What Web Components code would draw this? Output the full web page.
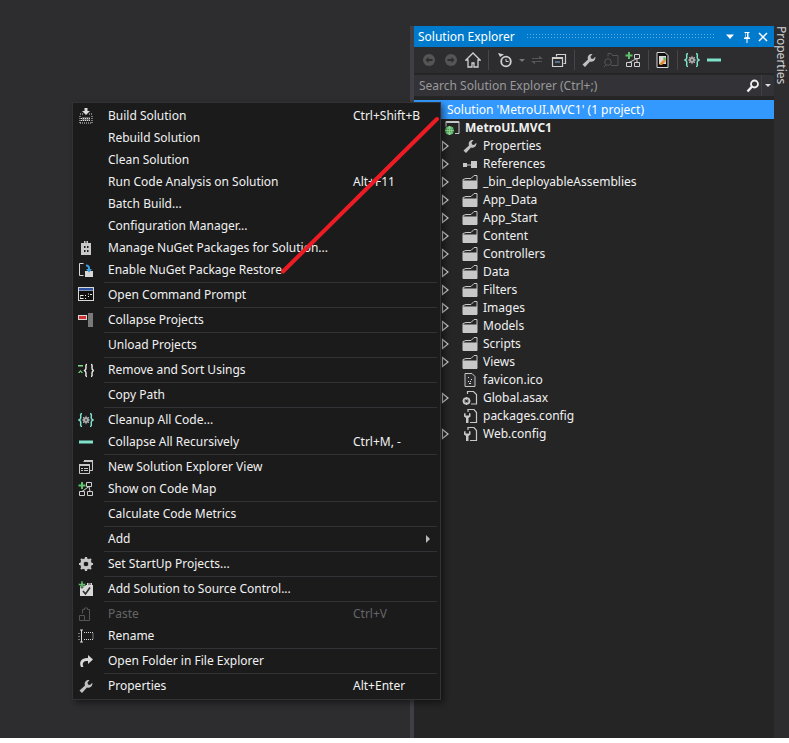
<!DOCTYPE html>
<html>
<head>
<meta charset="utf-8">
<title>Solution Explorer</title>
<style>
  html, body { margin: 0; background: #fff; }
</style>
</head>
<body>
<vs-app>
  <vs-menu slot="menu">
    <vs-item icon="build" keys="Ctrl+Shift+B">Build Solution</vs-item>
    <vs-item>Rebuild Solution</vs-item>
    <vs-item>Clean Solution</vs-item>
    <vs-item keys="Alt+F11">Run Code Analysis on Solution</vs-item>
    <vs-item>Batch Build...</vs-item>
    <vs-item>Configuration Manager...</vs-item>
    <vs-item icon="nuget">Manage NuGet Packages for Solution...</vs-item>
    <vs-item icon="restore">Enable NuGet Package Restore</vs-item>
    <vs-sep></vs-sep>
    <vs-item icon="cmd">Open Command Prompt</vs-item>
    <vs-sep></vs-sep>
    <vs-item icon="collapse">Collapse Projects</vs-item>
    <vs-sep></vs-sep>
    <vs-item>Unload Projects</vs-item>
    <vs-sep></vs-sep>
    <vs-item icon="sortusings">Remove and Sort Usings</vs-item>
    <vs-sep></vs-sep>
    <vs-item>Copy Path</vs-item>
    <vs-sep></vs-sep>
    <vs-item icon="cleanup">Cleanup All Code...</vs-item>
    <vs-item icon="minus" keys="Ctrl+M, -">Collapse All Recursively</vs-item>
    <vs-sep></vs-sep>
    <vs-item icon="newview">New Solution Explorer View</vs-item>
    <vs-item icon="codemap">Show on Code Map</vs-item>
    <vs-sep></vs-sep>
    <vs-item>Calculate Code Metrics</vs-item>
    <vs-sep></vs-sep>
    <vs-item submenu>Add</vs-item>
    <vs-sep></vs-sep>
    <vs-item icon="gear">Set StartUp Projects...</vs-item>
    <vs-sep></vs-sep>
    <vs-item icon="sourcectl">Add Solution to Source Control...</vs-item>
    <vs-sep></vs-sep>
    <vs-item icon="paste" keys="Ctrl+V" disabled>Paste</vs-item>
    <vs-item icon="rename">Rename</vs-item>
    <vs-sep></vs-sep>
    <vs-item icon="openfolder">Open Folder in File Explorer</vs-item>
    <vs-sep></vs-sep>
    <vs-item icon="wrench" keys="Alt+Enter">Properties</vs-item>
  </vs-menu>

  <vs-explorer slot="panel">
    <vs-row indent="33" selected>Solution 'MetroUI.MVC1' (1 project)</vs-row>
    <vs-row indent="30" icon="project" bold>MetroUI.MVC1</vs-row>
    <vs-row indent="27" toggle icon="wrench">Properties</vs-row>
    <vs-row indent="27" toggle icon="refs">References</vs-row>
    <vs-row indent="27" toggle icon="folder">_bin_deployableAssemblies</vs-row>
    <vs-row indent="27" toggle icon="folder">App_Data</vs-row>
    <vs-row indent="27" toggle icon="folder">App_Start</vs-row>
    <vs-row indent="27" toggle icon="folder">Content</vs-row>
    <vs-row indent="27" toggle icon="folder">Controllers</vs-row>
    <vs-row indent="27" toggle icon="folder">Data</vs-row>
    <vs-row indent="27" toggle icon="folder">Filters</vs-row>
    <vs-row indent="27" toggle icon="folder">Images</vs-row>
    <vs-row indent="27" toggle icon="folder">Models</vs-row>
    <vs-row indent="27" toggle icon="folder">Scripts</vs-row>
    <vs-row indent="27" toggle icon="folder">Views</vs-row>
    <vs-row indent="27" toggle="blank" icon="favicon">favicon.ico</vs-row>
    <vs-row indent="27" toggle icon="asax">Global.asax</vs-row>
    <vs-row indent="27" toggle="blank" icon="config">packages.config</vs-row>
    <vs-row indent="27" toggle icon="config">Web.config</vs-row>
  </vs-explorer>
</vs-app>

<script>
// all icons are drawn on a 16x16 box
const LIGHT = '#d0d0d0';
const ICONS = {
  build: `<path d="M6.5 0h3v3H12L8 7 4 3h2.5z" fill="#dcdcdc"/><path d="M2 6h3M11 6h3M2 8v7M14 8v7M2 15h12" stroke="#dcdcdc" stroke-width="1" stroke-dasharray="1 1" fill="none"/><path d="M4 9h8v4H4z" fill="#dcdcdc" opacity=".35"/><path d="M3 10.5h10M3 12.5h10" stroke="#dcdcdc" stroke-dasharray="1 1"/>`,
  nuget: `<path d="M3 3h3V1h1.5v2h1V1H10v2h3v12H3z" fill="#c8c8c8"/><path d="M6 6h1.5v2H6zM9 6h1.5v2H9zM6 10h1.5v2H6zM9 10h1.5v2H9z" fill="#1b1b1c"/>`,
  restore: `<path d="M5.5 1.5h-4v12h4M1.5 1.5" stroke="#d8d8d8" fill="none"/><path d="M7 9h8v6H7z" fill="#d8d8d8"/><path d="M8 2.5c2.5 0 4 1.3 4 3.5V7h2l-3 3.5L8 7h2V6c0-1-.8-1.6-2-1.6z" fill="#3b9fe0"/>`,
  cmd: `<path d="M0 0h16v14H0z" fill="#d8d8d8"/><path d="M1 1h14v2.5H1z" fill="#2c52a0"/><path d="M1 4h14v9H1z" fill="#101010"/><path d="M2.5 8h3v1h-3v2h3v1h-3.5V8.500zM7 8h1v1H7zM7 11h1v1H7zM10 6l1 1-1 1zM12 7h2v1h-2zM10 9h1v1h-1z" fill="#f0f0f0"/>`,
  collapse: `<path d="M0 3h9v5H0z" fill="#d8d8d8"/><path d="M1 4h7v3H1z" fill="#d03030"/><path d="M10 2h5M10 4h5M10 6h5M10 8h5M10 10h5M10 12h5M10 14h5" stroke="#d8d8d8" stroke-width="1"/>`,
  sortusings: `<path d="M0 3h5v1.500H0zM2.500 8l2.500 3H3.500v0L2.500 9.500 1.500 11H0z" fill="#7fe07f"/><path d="M9 2.500c-1.500 0-1 1.500-1 3.500s-1 2-1.500 2.500c.5.500 1.500.500 1.500 2.500s-.5 3.500 1 3.500M13 2.500c1.500 0 1 1.500 1 3.500s1 2 1.500 2.500c-.5.500-1.500.500-1.500 2.500s.5 3.500-1 3.500" fill="none" stroke="#f0f0f0" stroke-width="1.400"/>`,
  cleanup: `<path d="M4 1.500C2 1.500 2.800 4 2.800 5.500S1.800 7.500 1 8c.8.500 1.800.800 1.800 2.500S2 14.500 4 14.500M12 1.500c2 0 1.200 2.500 1.200 4s1 2 1.800 2.500c-.8.500-1.800.800-1.800 2.500s.8 4-1.200 4" fill="none" stroke="#7fe3cb" stroke-width="1.500"/><circle cx="8" cy="8" r="3" fill="#a8a8a8"/><path d="M8 3.800v8.400M3.800 8h8.400M5 5l6 6M11 5l-6 6" stroke="#a8a8a8"/><circle cx="8" cy="8" r="1" fill="#444"/>`,
  minus: `<path d="M1 6.500h14v3H1z" fill="#7fe3cb"/>`,
  newview: `<path d="M5.500 2.500h9v9H12" fill="none" stroke="#c8c8c8"/><path d="M6 1h9v2H6z" fill="#c8c8c8"/><path d="M1.500 5.500h10v9h-10z" fill="#1b1b1c" stroke="#c8c8c8"/><path d="M1 5h11v2H1zM3 9h2v1H3zM6 9h4v1H6zM3 11h2v1H3zM6 11h4v1H6z" fill="#c8c8c8"/>`,
  codemap: `<path d="M3 1h2v2.500h2.500v2H5V8H3V5.500H.5v-2H3z" fill="#5fc26a"/><path d="M8.500 1.500h5v4h-5zM1.500 10.500h5v4h-5zM9.500 10.500h5v4h-5zM11 5.500L4 10.500M11 5.500l1 5" fill="none" stroke="#d0d0d0"/>`,
  gear: `<circle cx="8" cy="8" r="4.500" fill="none" stroke="#c8c8c8" stroke-width="2.600"/><path d="M8 1v14M1 8h14M3 3l10 10M13 3L3 13" stroke="#c8c8c8" stroke-width="2.200"/><circle cx="8" cy="8" r="2.300" fill="#1b1b1c"/>`,
  sourcectl: `<path d="M2 4h13v11H2z" fill="#d8d8d8"/><path d="M9 2h5v3H9z" fill="#d8d8d8"/><path d="M3 0h2v2.500h2.500v2H5V7H3V4.500H.5v-2H3z" fill="#5fc26a" stroke="#1b1b1c" stroke-width=".5"/><path d="M5 10l2.500 3L12 6.500" fill="none" stroke="#2b2b2b" stroke-width="1.600"/><path d="M10 3h3" stroke="#2b2b2b"/>`,
  paste: `<path d="M4.500 7.500V3.500h2V2h3v1.500h2v11h-5M1.500 9.500h5v5h-5z" fill="none" stroke="#555"/>`,
  rename: `<path d="M2 2h3M2 14h3M3.500 2v12M1 5v1M1 8v1M1 11v1" stroke="#d8d8d8" fill="none"/><path d="M6 4.500h9v7H6" fill="none" stroke="#d8d8d8" stroke-dasharray="1 1"/>`,
  openfolder: `<path d="M3 14c-1.500-3-1-6 1-7.500C6 5 8 5 10 5V2l5 4.500-5 4.500V8C7.500 8 6.500 8 5.500 9.200 4.500 10.500 4.600 12 5.500 14z" fill="#d8d8d8"/>`,
  wrench: `<path d="M1.500 12.500L7 7.500C6 4.500 8 1.500 11.500 2l-2 2.500L10 6.500l2 .5 2.300-2.200C15 8 12 10.500 9 9.600L4 15z" fill="#c0c0c0"/>`,
  project: `<path d="M2 1.500h13v12h-4M2 1.500v5" fill="none" stroke="#c8c8c8"/><path d="M2 1h13v2H2z" fill="#c8c8c8"/><circle cx="5.500" cy="10.500" r="4.500" fill="#3f9a4d"/><path d="M1 10.500h9M5.500 6v9M2 8h7M2 13h7M5.500 6c-2.500 3-2.500 6 0 9M5.500 6c2.500 3 2.500 6 0 9" fill="none" stroke="#a6e0a6" stroke-width=".7"/>`,
  refs: `<path d="M1 7h4v4H1z" fill="#c8c8c8"/><path d="M5 8.500h4v1H5z" fill="#c8c8c8"/><path d="M9 5h6v7H9z" fill="#c8c8c8"/>`,
  folder: `<path d="M1 5.500l3-1h5l3-3h3v13H1z" fill="#252526" stroke="#c8c8c8"/><path d="M1 6.500h14v8H1z" fill="#c8c8c8"/>`,
  favicon: `<path d="M3 1.500h7l3 3v10H3z" fill="#2d2d30" stroke="#c8c8c8"/><path d="M6 5h1v1H6zM9 7h1v1H9zM6 9h1v1H6zM8 9h1v1H8zM7 11h2v1H7z" fill="#e0e0e0"/>`,
  asax: `<path d="M5.500 4V1.500h6l3 3v9.500H9" fill="none" stroke="#c8c8c8" stroke-width="1.200"/><circle cx="4.500" cy="11" r="3" fill="none" stroke="#c8c8c8" stroke-width="1.500"/><path d="M4.500 7v8M.5 11h8M2 8.500l5 5M7 8.500l-5 5" stroke="#c8c8c8"/><circle cx="4.500" cy="11" r="1.300" fill="#252526"/>`,
  config: `<path d="M6 4V1.500h6l2.500 3v10H8" fill="none" stroke="#c8c8c8" stroke-width="1.200"/><path d="M2 5.500v3L4 10v5h2.500v-5l2-1.500v-3L7 5v2.500H3.500V5z" fill="#c8c8c8"/>`,
  // toolbar
  back: `<circle cx="8" cy="8" r="6" fill="#555"/><path d="M4.500 8l3-3v2h4v2h-4v2z" fill="#2d2d30"/>`,
  forward: `<circle cx="8" cy="8" r="6" fill="#555"/><path d="M11.500 8l-3-3v2h-4v2h4v2z" fill="#2d2d30"/>`,
  home: `<path d="M8 1L1 8h2v7h4v-4h2v4h4V8h2z" fill="none" stroke="#d0d0d0" stroke-width="1.300"/>`,
  history: `<circle cx="9" cy="9.500" r="4.800" fill="none" stroke="#d0d0d0" stroke-width="1.800"/><path d="M9 7v2.500h2.500" fill="none" stroke="#d0d0d0"/><path d="M1 1l6 1.500L3 5z" fill="#d0d0d0"/>`,
  sync: `<path d="M3 6h7V3.500L14 7H3zM13 10H6v2.500L2 9h11z" fill="#555"/>`,
  windows: `<path d="M5.500 4.500v-2h9v9h-2" fill="none" stroke="#d0d0d0" stroke-width="1.200"/><path d="M1.500 5.500h10v9h-10z" fill="none" stroke="#d0d0d0" stroke-width="1.200"/><path d="M1 5h11v2H1z" fill="#d0d0d0"/><path d="M4 9.500h5v1H4z" fill="#7fb6e0"/>`,
  showfiles: `<path d="M5 4.500V1.500h3l1.500 2h5.500v10H8" fill="none" stroke="#555"/><circle cx="5" cy="10" r="3.300" fill="none" stroke="#555"/><path d="M3 13l-2 2" stroke="#555"/>`,
  view: `<path d="M3 0h2v2.500h2.500v2H5V7H3V4.500H.5v-2H3z" fill="#5fc26a"/><path d="M9.500 2.500h5v4h-5zM1.500 10.500h5v4h-5zM9.500 10.500h5v4h-5zM12 6.500L4 10.500M12 6.500v4" fill="none" stroke="#d0d0d0"/>`,
  preview: `<path d="M3 .5h8l3 3v12H3z" fill="#101010" stroke="#d8d8d8"/><path d="M5 4h7v8H5z" fill="#d8d8d8"/><path d="M5.500 12L10 7l2 2-4 4H5.500z" fill="#e88a2c"/><path d="M10 5l2.500 2-1.500 1.500L9 6.500z" fill="#5fb65f"/>`
};

class VsIcon extends HTMLElement {
  connectedCallback() {
    const root = this.shadowRoot || this.attachShadow({ mode: 'open' });
    root.innerHTML = `
      <style>
        :host { display: block; width: 16px; height: 16px; flex: none; }
        svg { display: block; }
      </style>
      <svg xmlns="http://www.w3.org/2000/svg" width="16" height="16" viewBox="0 0 16 16">${ICONS[this.getAttribute('name')] || ''}</svg>`;
  }
}

class VsItem extends HTMLElement {
  connectedCallback() {
    const root = this.shadowRoot || this.attachShadow({ mode: 'open' });
    const icon = this.getAttribute('icon');
    const keys = this.getAttribute('keys');
    root.innerHTML = `
      <style>
        :host { display: flex; align-items: center; height: 22px; color: #f1f1f1; }
        :host([disabled]) { color: #656565; }
        .gutter { width: 35px; flex: none; padding-left: 5px; box-sizing: border-box; }
        .label { width: 245px; flex: none; white-space: nowrap; }
        .keys { flex: 1; white-space: nowrap; }
        .arrow { width: 0; height: 0; margin-right: 10px; border-left: 4px solid #b8b8b8;
                 border-top: 4px solid transparent; border-bottom: 4px solid transparent; }
      </style>
      <div class="gutter">${icon ? `<vs-icon name="${icon}"></vs-icon>` : ''}</div>
      <div class="label"><slot></slot></div>
      <div class="keys">${keys || ''}</div>
      ${this.hasAttribute('submenu') ? '<div class="arrow"></div>' : ''}`;
  }
}

class VsSep extends HTMLElement {
  constructor() {
    super();
    this.attachShadow({ mode: 'open' }).innerHTML = `
      <style>
        :host { display: block; height: 1px; margin: 1px 3px 1px 31px; background: #333337; }
      </style>`;
  }
}

class VsMenu extends HTMLElement {
  constructor() {
    super();
    this.attachShadow({ mode: 'open' }).innerHTML = `
      <style>
        :host {
          display: block; position: absolute; left: 72px; top: 102px; width: 369px;
          box-sizing: border-box; padding: 2px 0; background: #1b1b1c;
          border: 1px solid #333337; box-shadow: 3px 3px 6px rgba(0,0,0,.45);
        }
      </style>
      <slot></slot>`;
  }
}

class VsRow extends HTMLElement {
  connectedCallback() {
    const root = this.shadowRoot || this.attachShadow({ mode: 'open' });
    const icon = this.getAttribute('icon');
    const toggle = this.getAttribute('toggle');
    const hasToggle = this.hasAttribute('toggle');
    root.innerHTML = `
      <style>
        :host { display: flex; align-items: center; height: 18px; color: #f1f1f1; white-space: nowrap;
                padding-left: ${this.getAttribute('indent') || 0}px; }
        :host([selected]) { height: 19px; background: #3399ff; color: #fff; }
        :host([bold]) { font-weight: 700; }
        .toggle { width: 21px; flex: none; }
        .toggle svg { display: block; }
        .label { margin-left: ${icon ? 5 : 0}px; }
      </style>
      ${hasToggle ? `<div class="toggle">${toggle === 'blank' ? '' :
        '<svg width="10" height="12" viewBox="0 0 10 12"><path d="M1.500 1.500L7 6l-5.500 4.500z" fill="none" stroke="#c8c8c8" stroke-width="1.200"/></svg>'}</div>` : ''}
      ${icon ? `<vs-icon name="${icon}"></vs-icon>` : ''}
      <div class="label"><slot></slot></div>`;
  }
}

class VsExplorer extends HTMLElement {
  constructor() {
    super();
    const tool = (n, extra) => `<div class="tool" style="${extra || ''}"><vs-icon name="${n}"></vs-icon></div>`;
    const sep = r => `<div class="sep" style="margin-right:${r}px"></div>`;
    this.attachShadow({ mode: 'open' }).innerHTML = `
      <style>
        :host { display: flex; flex-direction: column; width: 360px; margin-top: 26px; background: #252526; }
        .title { display: flex; align-items: center; height: 21px; padding: 0 4px; background: #007acc; color: #fff; }
        .grip { flex: 1; height: 7px; margin: 0 11px 0 11px;
                background-image: radial-gradient(circle, #5aaee0 .7px, transparent .9px);
                background-size: 3px 3px; }
        .title svg { display: block; flex: none; }
        .tools { display: flex; align-items: center; height: 26px; padding-left: 4px; background: #2d2d30; }
        .tool { width: 22px; height: 22px; display: flex; align-items: center; justify-content: center; flex: none; }
        .sep { width: 1px; height: 20px; margin-left: 4px; background: #46464a; flex: none; }
        .drop { width: 0; height: 0; margin: 0 1px 0 3px; border-top: 3px solid #777; flex: none;
                border-left: 3px solid transparent; border-right: 3px solid transparent; }
        .search { display: flex; align-items: center; height: 21px; margin-top: 2px; padding-left: 5px;
                  background: #333337; color: #999; }
        .search span { flex: 1; }
        .search .bar { width: 1px; height: 21px; background: #3f3f46; margin: 0 3px 0 1px; }
        .search i { display: block; width: 0; height: 0; margin-right: 3px; border-top: 3px solid #d8d8d8;
                    border-left: 3px solid transparent; border-right: 3px solid transparent; }
        .tree { flex: 1; padding-top: 4px; }
      </style>
      <div class="title">
        <span>Solution Explorer</span>
        <div class="grip"></div>
        <svg width="10" height="6" viewBox="0 0 10 6"><path d="M1 .5h8L5 5z" fill="#fff"/></svg>
        <svg style="margin-left:7px" width="10" height="12" viewBox="0 0 10 12"><path d="M2.500 1h5v1h-1v4.500H8V8H5.500v4h-1V8H2V6.500h1.500V2h-1z" fill="#fff"/><path d="M4 2h1v4H4z" fill="#007acc"/></svg>
        <svg style="margin-left:6px;margin-right:2px" width="10" height="10" viewBox="0 0 10 10"><path d="M1 1l8 8M9 1L1 9" stroke="#fff" stroke-width="1.500"/></svg>
      </div>
      <div class="tools">
        ${tool('back')}${tool('forward')}${tool('home')}${sep(5)}
        ${tool('history')}<div class="drop"></div>${tool('sync')}${tool('windows')}${sep(3)}
        ${tool('wrench')}${tool('showfiles')}${tool('view')}${sep(2)}
        ${tool('preview')}${sep(3)}
        ${tool('cleanup')}${tool('minus')}
      </div>
      <div class="search">
        <span>Search Solution Explorer (Ctrl+;)</span>
        <svg width="14" height="14" viewBox="0 0 14 14"><circle cx="8.500" cy="5" r="3.500" fill="none" stroke="#f0f0f0" stroke-width="1.800"/><path d="M6 7.500L1.500 12.500" stroke="#f0f0f0" stroke-width="2.400"/></svg>
        <div class="bar"></div><i></i>
      </div>
      <div class="tree"><slot></slot></div>`;
  }
}

class VsApp extends HTMLElement {
  constructor() {
    super();
    this.attachShadow({ mode: 'open' }).innerHTML = `
      <style>
        :host {
          display: flex; position: relative; height: 738px; overflow: hidden; background: #2d2d30;
          font: 12px/16px "Noto Sans", "Open Sans", sans-serif;
        }
        .doc { width: 410px; flex: none; }
        .split { width: 4px; flex: none; background: #3f3f46; margin-top: 26px; }
        .side { flex: 1; overflow: hidden; padding: 26px 0 0 8px; writing-mode: vertical-rl; color: #d0d0d0; white-space: nowrap; }
        .arrow { position: absolute; left: 0; top: 0; pointer-events: none; }
      </style>
      <div class="doc"></div>
      <div class="split"></div>
      <slot name="panel"></slot>
      <div class="side">Properties</div>
      <slot name="menu"></slot>
      <svg class="arrow" width="789" height="738"><path d="M283 271.500L437 119" stroke="#ed1c24" stroke-width="4" stroke-linecap="round"/></svg>`;
  }
}

customElements.define('vs-icon', VsIcon);
customElements.define('vs-item', VsItem);
customElements.define('vs-sep', VsSep);
customElements.define('vs-menu', VsMenu);
customElements.define('vs-row', VsRow);
customElements.define('vs-explorer', VsExplorer);
customElements.define('vs-app', VsApp);
</script>
</body>
</html>
